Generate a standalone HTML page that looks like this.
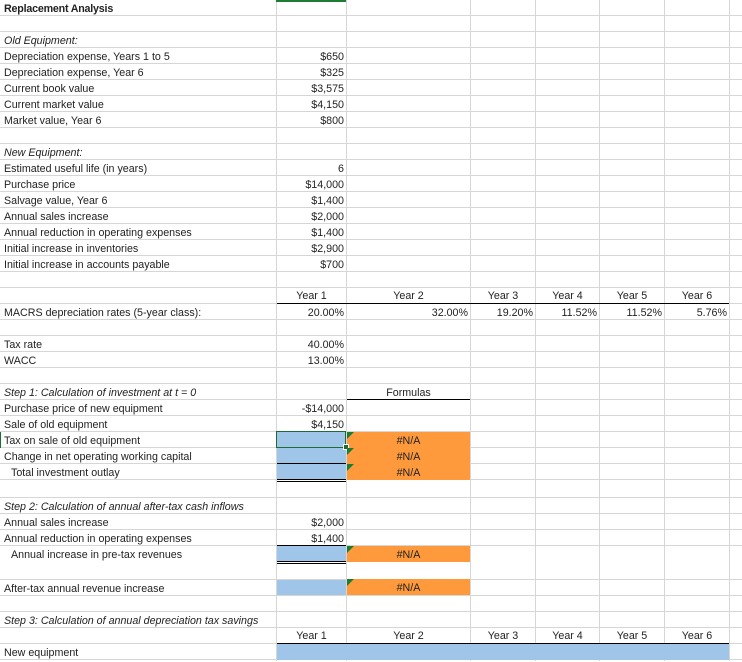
<!DOCTYPE html>
<html><head><meta charset="utf-8"><style>
body{margin:0;width:742px;height:661px;overflow:hidden;background:#fff;position:relative;font-family:"Liberation Sans",Arial,sans-serif;font-size:10.7px;color:#222}
.g{position:absolute;left:0;width:742px;background:repeating-linear-gradient(to bottom,transparent 0 15px,#d6d6d6 15px 16px)}
.v{position:absolute;top:0;width:1px;height:661px;background:#d6d6d6}
.t{position:absolute;height:16px;line-height:18px;white-space:nowrap;overflow:visible}
.l{padding-left:4px}
.r{text-align:right}
.c{text-align:center}
.i{font-style:italic}
.f{position:absolute}
.bl{background:#9fc5e8}
.or{background:#ff9a3c}
.k{position:absolute;height:1px;background:#000}
.tri{position:absolute;width:0;height:0;border-top:7px solid #1e7b34;border-right:7px solid transparent}
</style></head><body>
<div class="g" style="top:0;height:480px"></div>
<div class="g" style="top:482px;height:64px"></div>
<div class="g" style="top:564px;height:97px"></div>
<div class="v" style="left:276px"></div><div class="v" style="left:346px"></div><div class="v" style="left:470px"></div><div class="v" style="left:535px"></div><div class="v" style="left:599px"></div><div class="v" style="left:664px"></div><div class="v" style="left:729px"></div>

<!-- fills -->
<div class="f bl" style="left:277px;top:432px;width:69px;height:47px"></div>
<div class="f or" style="left:347px;top:432px;width:123px;height:48px"></div>
<div class="f bl" style="left:277px;top:546px;width:69px;height:15px"></div>
<div class="f or" style="left:347px;top:546px;width:123px;height:16px"></div>
<div class="f bl" style="left:277px;top:580px;width:69px;height:15px"></div>
<div class="f or" style="left:347px;top:579px;width:123px;height:16px"></div>
<div class="f bl" style="left:277px;top:644px;width:452px;height:16px"></div>
<div class="f" style="left:276px;top:431px;width:68px;height:15px;border:1px solid #1e6b34"></div>
<div class="f" style="left:343px;top:444px;width:4px;height:4px;background:#1e6b34;border:1px solid #fff"></div>
<div class="f" style="left:276px;top:0;width:70px;height:2px;background:#1e7b34"></div>
<div class="f" style="left:0;top:432px;width:1px;height:16px;background:#1e6b34"></div>
<div class="tri" style="left:347px;top:432px"></div><div class="tri" style="left:347px;top:448px"></div><div class="tri" style="left:347px;top:464px"></div><div class="tri" style="left:347px;top:546px"></div><div class="tri" style="left:347px;top:579px"></div>

<!-- black borders -->
<div class="k" style="left:277px;top:303px;width:452px"></div>
<div class="k" style="left:347px;top:399px;width:123px"></div>
<div class="k" style="left:277px;top:463px;width:69px"></div>
<div class="k" style="left:277px;top:479px;width:69px"></div><div class="k" style="left:277px;top:481px;width:69px"></div>
<div class="k" style="left:277px;top:545px;width:69px"></div>
<div class="k" style="left:277px;top:561px;width:69px"></div><div class="k" style="left:277px;top:563px;width:69px"></div>
<div class="k" style="left:277px;top:643px;width:452px"></div>

<!-- column A text -->
<div class="t l" style="top:0;font-weight:bold;letter-spacing:-0.2px">Replacement Analysis</div>
<div class="t l i" style="top:32px">Old Equipment:</div>
<div class="t l" style="top:48px">Depreciation expense, Years 1 to 5</div>
<div class="t l" style="top:64px">Depreciation expense, Year 6</div>
<div class="t l" style="top:80px">Current book value</div>
<div class="t l" style="top:96px">Current market value</div>
<div class="t l" style="top:112px">Market value, Year 6</div>
<div class="t l i" style="top:144px">New Equipment:</div>
<div class="t l" style="top:160px">Estimated useful life (in years)</div>
<div class="t l" style="top:176px">Purchase price</div>
<div class="t l" style="top:192px">Salvage value, Year 6</div>
<div class="t l" style="top:208px">Annual sales increase</div>
<div class="t l" style="top:224px">Annual reduction in operating expenses</div>
<div class="t l" style="top:240px">Initial increase in inventories</div>
<div class="t l" style="top:256px">Initial increase in accounts payable</div>
<div class="t l" style="top:304px">MACRS depreciation rates (5-year class):</div>
<div class="t l" style="top:336px">Tax rate</div>
<div class="t l" style="top:352px">WACC</div>
<div class="t l i" style="top:384px">Step 1: Calculation of investment at t = 0</div>
<div class="t l" style="top:400px">Purchase price of new equipment</div>
<div class="t l" style="top:416px">Sale of old equipment</div>
<div class="t l" style="top:432px">Tax on sale of old equipment</div>
<div class="t l" style="top:448px">Change in net operating working capital</div>
<div class="t l" style="top:464px;padding-left:11px">Total investment outlay</div>
<div class="t l i" style="top:498px">Step 2: Calculation of annual after-tax cash inflows</div>
<div class="t l" style="top:514px">Annual sales increase</div>
<div class="t l" style="top:530px">Annual reduction in operating expenses</div>
<div class="t l" style="top:546px;padding-left:11px">Annual increase in pre-tax revenues</div>
<div class="t l" style="top:580px">After-tax annual revenue increase</div>
<div class="t l i" style="top:612px">Step 3: Calculation of annual depreciation tax savings</div>
<div class="t l" style="top:644px">New equipment</div>

<!-- column B values -->
<div class="t r" style="left:277px;width:67px;top:48px">$650</div>
<div class="t r" style="left:277px;width:67px;top:64px">$325</div>
<div class="t r" style="left:277px;width:67px;top:80px">$3,575</div>
<div class="t r" style="left:277px;width:67px;top:96px">$4,150</div>
<div class="t r" style="left:277px;width:67px;top:112px">$800</div>
<div class="t r" style="left:277px;width:67px;top:160px">6</div>
<div class="t r" style="left:277px;width:67px;top:176px">$14,000</div>
<div class="t r" style="left:277px;width:67px;top:192px">$1,400</div>
<div class="t r" style="left:277px;width:67px;top:208px">$2,000</div>
<div class="t r" style="left:277px;width:67px;top:224px">$1,400</div>
<div class="t r" style="left:277px;width:67px;top:240px">$2,900</div>
<div class="t r" style="left:277px;width:67px;top:256px">$700</div>
<div class="t r" style="left:277px;width:67px;top:304px">20.00%</div>
<div class="t r" style="left:277px;width:67px;top:336px">40.00%</div>
<div class="t r" style="left:277px;width:67px;top:352px">13.00%</div>
<div class="t r" style="left:277px;width:67px;top:400px">-$14,000</div>
<div class="t r" style="left:277px;width:67px;top:416px">$4,150</div>
<div class="t r" style="left:277px;width:67px;top:514px">$2,000</div>
<div class="t r" style="left:277px;width:67px;top:530px">$1,400</div>

<!-- rates row -->
<div class="t r" style="left:347px;width:121px;top:304px">32.00%</div>
<div class="t r" style="left:471px;width:62px;top:304px">19.20%</div>
<div class="t r" style="left:536px;width:61px;top:304px">11.52%</div>
<div class="t r" style="left:600px;width:62px;top:304px">11.52%</div>
<div class="t r" style="left:665px;width:62px;top:304px">5.76%</div>

<!-- Year headers -->
<div class="t c" style="left:277px;width:69px;top:287px">Year 1</div>
<div class="t c" style="left:347px;width:123px;top:287px">Year 2</div>
<div class="t c" style="left:471px;width:64px;top:287px">Year 3</div>
<div class="t c" style="left:536px;width:63px;top:287px">Year 4</div>
<div class="t c" style="left:600px;width:64px;top:287px">Year 5</div>
<div class="t c" style="left:665px;width:64px;top:287px">Year 6</div>
<div class="t c" style="left:277px;width:69px;top:627px">Year 1</div>
<div class="t c" style="left:347px;width:123px;top:627px">Year 2</div>
<div class="t c" style="left:471px;width:64px;top:627px">Year 3</div>
<div class="t c" style="left:536px;width:63px;top:627px">Year 4</div>
<div class="t c" style="left:600px;width:64px;top:627px">Year 5</div>
<div class="t c" style="left:665px;width:64px;top:627px">Year 6</div>

<!-- column C -->
<div class="t c" style="left:347px;width:123px;top:384px">Formulas</div>
<div class="t c" style="left:347px;width:123px;top:432px">#N/A</div>
<div class="t c" style="left:347px;width:123px;top:448px">#N/A</div>
<div class="t c" style="left:347px;width:123px;top:464px">#N/A</div>
<div class="t c" style="left:347px;width:123px;top:546px">#N/A</div>
<div class="t c" style="left:347px;width:123px;top:579px">#N/A</div>
</body></html>
